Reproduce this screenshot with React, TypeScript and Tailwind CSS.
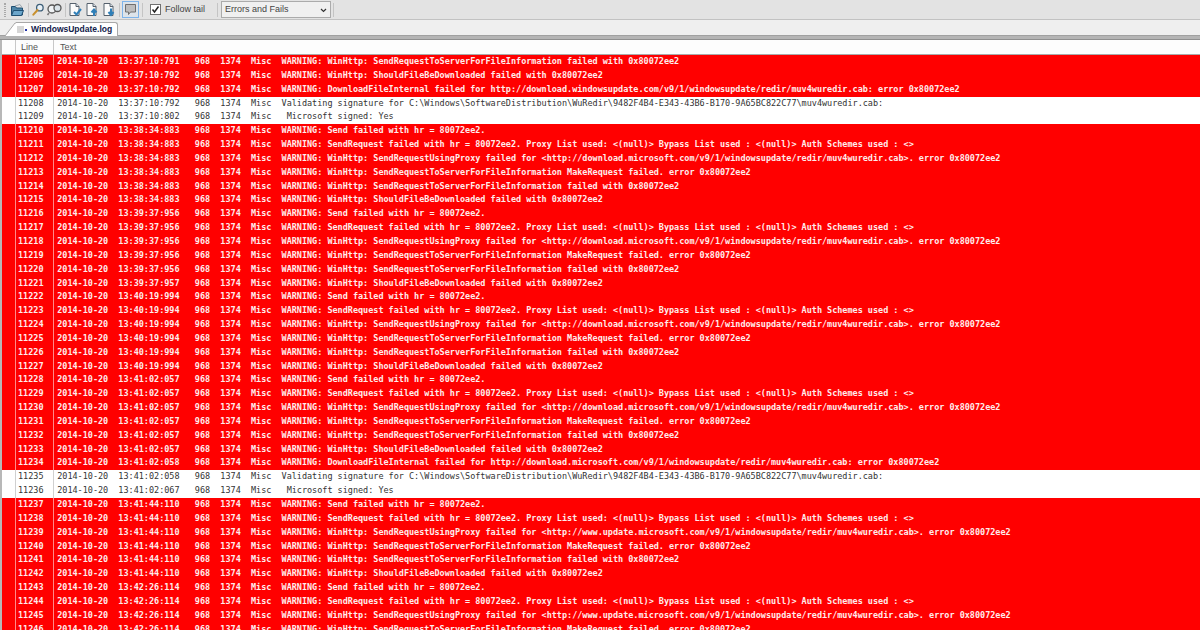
const MONO = 'font-["DejaVu_Sans_Mono",monospace]';
const UI = "font-['Liberation_Sans',sans-serif]";

const TO_SERVER = 'WARNING: WinHttp: SendRequestToServerForFileInformation failed with 0x80072ee2';
const SHOULD = 'WARNING: WinHttp: ShouldFileBeDownloaded failed with 0x80072ee2';
const SEND = 'WARNING: Send failed with hr = 80072ee2.';
const SEND_REQ = 'WARNING: SendRequest failed with hr = 80072ee2. Proxy List used: <(null)> Bypass List used : <(null)> Auth Schemes used : <>';
const MAKE_REQ = 'WARNING: WinHttp: SendRequestToServerForFileInformation MakeRequest failed. error 0x80072ee2';
const VALIDATING = 'Validating signature for C:\\Windows\\SoftwareDistribution\\WuRedir\\9482F4B4-E343-43B6-B170-9A65BC822C77\\muv4wuredir.cab:';
const SIGNED = ' Microsoft signed: Yes';

function proxy(host: string) {
  return `WARNING: WinHttp: SendRequestUsingProxy failed for <http://${host}/v9/1/windowsupdate/redir/muv4wuredir.cab>. error 0x80072ee2`;
}

function downloadFailed(host: string) {
  return `WARNING: DownloadFileInternal failed for http://${host}/v9/1/windowsupdate/redir/muv4wuredir.cab: error 0x80072ee2`;
}

function retry(time: string, host: string, lastTime = time): [string, string][] {
  return [
    [time, SEND],
    [time, SEND_REQ],
    [time, proxy(host)],
    [time, MAKE_REQ],
    [time, TO_SERVER],
    [lastTime, SHOULD],
  ];
}

const MS = 'download.microsoft.com';
const WWW = 'www.update.microsoft.com';

const entries: [string, string][] = [
  ['13:37:10:791', TO_SERVER],
  ['13:37:10:792', SHOULD],
  ['13:37:10:792', downloadFailed('download.windowsupdate.com')],
  ['13:37:10:792', VALIDATING],
  ['13:37:10:802', SIGNED],
  ...retry('13:38:34:883', MS),
  ...retry('13:39:37:956', MS, '13:39:37:957'),
  ...retry('13:40:19:994', MS),
  ...retry('13:41:02:057', MS),
  ['13:41:02:058', downloadFailed(MS)],
  ['13:41:02:058', VALIDATING],
  ['13:41:02:067', SIGNED],
  ...retry('13:41:44:110', WWW),
  ...retry('13:42:26:114', WWW),
];

function LogRow({ line, time, text }: { line: number; time: string; text: string }) {
  const ok = text === VALIDATING || text === SIGNED;
  const rowColor = ok ? 'bg-white text-[#333] font-normal' : 'bg-[#ff0000] text-[#ffecec] font-bold';
  const sep = ok ? 'border-[#d0d0d0]' : 'border-[#ff8a8a]';
  return (
    <div className={`flex h-[13.85px] shrink-0 items-center whitespace-pre text-[8.47px] leading-[13.85px] ${MONO} ${rowColor}`}>
      <div className={`h-full w-[14px] shrink-0 border-r ${sep}`} />
      <div className={`h-full w-[38px] shrink-0 border-r pl-[2px] ${sep}`}>{line}</div>
      <div className="pl-[3.2px]">{`2014-10-20  ${time}   968  1374  Misc  ${text}`}</div>
    </div>
  );
}

function Separator({ className }: { className: string }) {
  return <div className={`h-[14px] w-px bg-[#c4c4c4] ${className}`} />;
}

function PageIcon({ children }: { children: React.ReactNode }) {
  return (
    <svg width="15" height="15" viewBox="0 0 15 15">
      <path d="M2 1.5h6l3 3v9H2z" fill="#fbfbfb" stroke="#55606c" />
      <path d="M8 1.5v3h3" fill="#d8dde2" stroke="#55606c" />
      {children}
    </svg>
  );
}

function Toolbar() {
  return (
    <div className="flex h-[20px] shrink-0 items-center border-b border-[#c2c2c2] bg-[#e3e3e3] pl-[4px]">
      <div className="mr-[2px] h-[14px] w-[2px] border-x border-dotted border-[#a8a8a8]" />
      <button className="flex w-[18px] justify-center">
        <svg width="15" height="14" viewBox="0 0 15 14">
          <path d="M1.500 3.500h4l1 1.500h6v7h-11z" fill="#4f86a8" stroke="#1f4f72" />
          <path d="M1.500 12.500l2-5h10l-2 5z" fill="#6ba6cb" stroke="#1f4f72" />
          <path d="M5 3l5-1.500 2 3" fill="none" stroke="#9aa5ad" />
        </svg>
      </button>
      <Separator className="mx-[2px]" />
      <button className="flex w-[14px] justify-center">
        <svg width="14" height="15" viewBox="0 0 15 15">
          <circle cx="9.500" cy="5.500" r="3.500" fill="#e8f1f7" stroke="#3e5f78" strokeWidth="1.400" />
          <path d="M7 8l-4.500 5" stroke="#c8912f" strokeWidth="2.200" strokeLinecap="round" />
        </svg>
      </button>
      <button className="ml-[1px] flex w-[17px] justify-center">
        <svg width="17" height="15" viewBox="0 0 17 15">
          <circle cx="6" cy="7" r="4" fill="#f0f3f5" stroke="#555" strokeWidth="1.300" />
          <circle cx="11.500" cy="6" r="3.500" fill="#dbe4ea" stroke="#555" strokeWidth="1.300" />
          <path d="M3 11l-1.500 2" stroke="#777" strokeWidth="1.600" />
        </svg>
      </button>
      <Separator className="mx-[2px]" />
      <button className="flex w-[15px] justify-center">
        <PageIcon>
          <path d="M6 10l2.500 2.500L13 7" fill="none" stroke="#2f7fb8" strokeWidth="2" />
        </PageIcon>
      </button>
      <button className="ml-[2px] flex w-[15px] justify-center">
        <PageIcon>
          <path d="M9 14V8.500M6.500 10.500L9 7.500l2.500 3" fill="none" stroke="#2f7fb8" strokeWidth="2" />
        </PageIcon>
      </button>
      <button className="ml-[2px] flex w-[15px] justify-center">
        <PageIcon>
          <path d="M9 6.500V12M6.500 10l2.500 3 2.500-3" fill="none" stroke="#2f7fb8" strokeWidth="2" />
        </PageIcon>
      </button>
      <Separator className="mx-[2px]" />
      <button className="flex h-[17px] w-[17px] items-center justify-center border border-[#7eb4ea] bg-[#dde4ea]">
        <svg width="13" height="13" viewBox="0 0 13 13">
          <path d="M1.500 1.500h10v7.500H6.500L4.500 11.500V9h-3z" fill="#bdbdbd" stroke="#6f6f6f" />
        </svg>
      </button>
      <Separator className="ml-[3px]" />
      <div className="ml-[7px] flex h-[11px] w-[11px] items-center justify-center border border-[#707070] bg-white">
        <svg width="9" height="9" viewBox="0 0 9 9">
          <path d="M1.500 4.500L3.500 7 7.500 1.500" fill="none" stroke="#222" strokeWidth="1.500" />
        </svg>
      </div>
      <span className={`ml-[4px] w-[52px] text-[9px] text-[#444] ${UI}`}>Follow tail</span>
      <Separator className="mr-[3px]" />
      <div className="flex h-[17px] w-[110px] items-center justify-between border border-[#ababab] bg-[#f0f0f0] pt-[1px] pl-[3px] pr-[3px]">
        <span className={`text-[9px] text-[#444] ${UI}`}>Errors and Fails</span>
        <svg width="7" height="5" viewBox="0 0 7 5">
          <path d="M1 1l2.500 2.500L6 1" fill="none" stroke="#333" strokeWidth="1.200" />
        </svg>
      </div>
      <Separator className="ml-[2px]" />
    </div>
  );
}

function TabStrip() {
  return (
    <div className="flex h-[16px] shrink-0 items-end border-b border-[#a0a0a0] bg-[#efefef] pl-[5px]">
      <svg width="11" height="14" viewBox="0 0 11 14" className="-mb-px shrink-0">
        <path d="M0 14L10 1h1v13z" fill="#fff" />
        <path d="M0 14L10 1h1" fill="none" stroke="#a8a8a8" />
      </svg>
      <div className="-mb-px flex h-[14px] w-[102px] items-center rounded-tr-[3px] border-t border-r border-[#a8a8a8] bg-white pl-[1px]">
        <div className="h-[7px] w-[7px] bg-[#d6d6d6]" />
        <div className="ml-[1px] h-[2px] w-[2px] bg-[#2233aa]" />
        <span className={`ml-[4px] text-[8.5px] font-bold text-[#10204a] ${UI}`}>WindowsUpdate.log</span>
      </div>
    </div>
  );
}

function GridHeader() {
  return (
    <div className={`flex h-[15px] shrink-0 items-center border-b border-[#aaaaaa] bg-[#fdfdfd] text-[9px] text-[#555] ${UI}`}>
      <div className="h-full w-[14px] shrink-0 border-r border-[#c8c8c8]" />
      <div className="h-full w-[38px] shrink-0 border-r border-[#c8c8c8] pl-[5px] leading-[14px]">Line</div>
      <div className="pl-[6px] leading-[14px]">Text</div>
    </div>
  );
}

export default function App() {
  return (
    <div className="flex h-[630px] w-[1200px] flex-col overflow-hidden bg-white">
      <Toolbar />
      <TabStrip />
      <div className="h-[4px] shrink-0 border-b border-[#8f8f8f] bg-[#b4b4b4]" />
      <div className="flex min-h-0 flex-1 border-l-2 border-[#b8b8b8]">
        <div className="flex min-w-0 flex-1 flex-col overflow-hidden">
          <GridHeader />
          {entries.map(([time, text], i) => (
            <LogRow key={i} line={11205 + i} time={time} text={text} />
          ))}
        </div>
      </div>
    </div>
  );
}
